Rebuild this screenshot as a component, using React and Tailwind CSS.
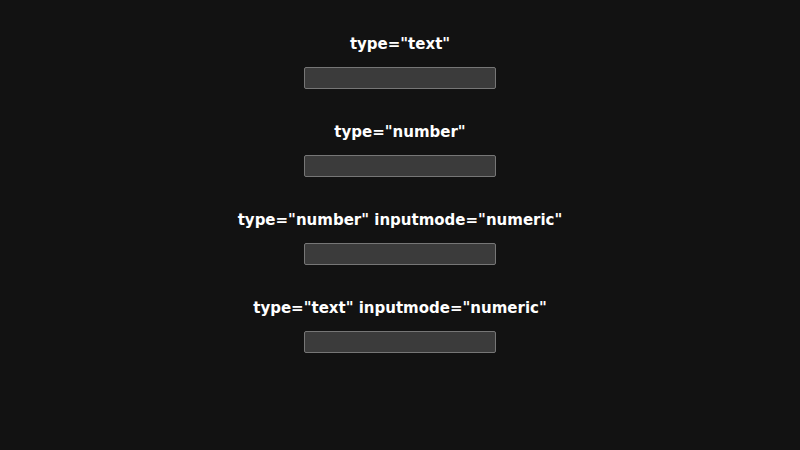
export default function App() {
  const labels = [
    'type="text"',
    'type="number"',
    'type="number" inputmode="numeric"',
    'type="text" inputmode="numeric"',
  ];
  return (
    <div className="min-h-[450px] w-full bg-[#121212] pt-[32px] font-['DejaVu_Sans',sans-serif] text-white">
      <div className="flex flex-col items-center gap-[31px]">
        {labels.map((l) => (
          <div key={l} className="flex flex-col items-center gap-[11px]">
            <h2 className="text-[15px] font-bold leading-6">{l}</h2>
            <input
              type="text"
              className="h-[22px] w-[192px] rounded-[2px] border border-[#767676] bg-[#3b3b3b] outline-none"
            />
          </div>
        ))}
      </div>
    </div>
  );
}
